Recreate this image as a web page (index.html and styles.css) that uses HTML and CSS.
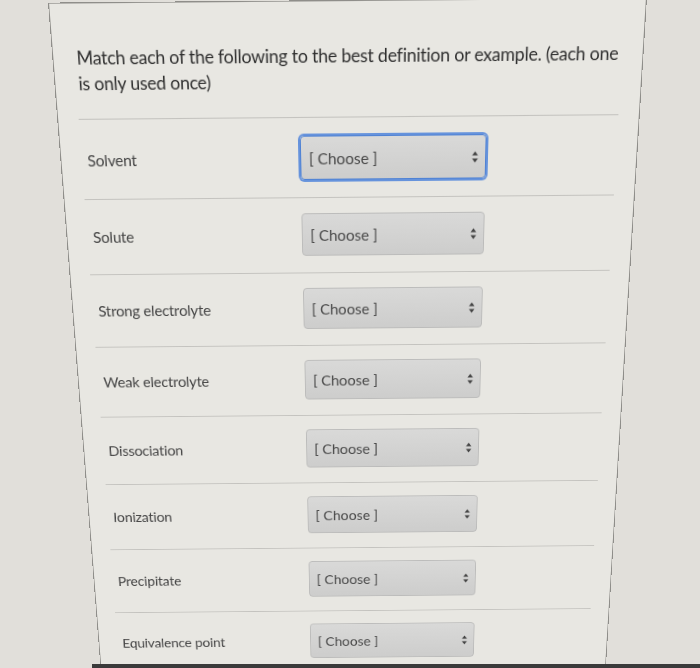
FILE: index.html
```html
<!DOCTYPE html>
<html lang="en">
<head>
    <meta charset="UTF-8">
    <title>Matching Question</title>
    <meta name="viewport" content="width=device-width, initial-scale=1">
    <link rel="stylesheet" href="styles.css">
</head>
<body>
    <div class="stage">
        <div class="question">
            <div class="question-text">Match each of the following to the best definition or example. (each one is only used once)</div>
            <div class="answers">
                <div class="answer-row">
                    <span class="answer-label">Solvent</span>
                    <div class="choose focused"><span>[ Choose ]</span><svg class="arrows" width="7" height="12" viewBox="0 0 7 12"><path d="M3.5 0.5L6.5 4.6H0.5Z M3.5 11.5L0.5 7.4H6.5Z"/></svg></div>
                </div>
                <div class="answer-row">
                    <span class="answer-label">Solute</span>
                    <div class="choose"><span>[ Choose ]</span><svg class="arrows" width="7" height="12" viewBox="0 0 7 12"><path d="M3.5 0.5L6.5 4.6H0.5Z M3.5 11.5L0.5 7.4H6.5Z"/></svg></div>
                </div>
                <div class="answer-row">
                    <span class="answer-label">Strong electrolyte</span>
                    <div class="choose"><span>[ Choose ]</span><svg class="arrows" width="7" height="12" viewBox="0 0 7 12"><path d="M3.5 0.5L6.5 4.6H0.5Z M3.5 11.5L0.5 7.4H6.5Z"/></svg></div>
                </div>
                <div class="answer-row">
                    <span class="answer-label">Weak electrolyte</span>
                    <div class="choose"><span>[ Choose ]</span><svg class="arrows" width="7" height="12" viewBox="0 0 7 12"><path d="M3.5 0.5L6.5 4.6H0.5Z M3.5 11.5L0.5 7.4H6.5Z"/></svg></div>
                </div>
                <div class="answer-row">
                    <span class="answer-label">Dissociation</span>
                    <div class="choose"><span>[ Choose ]</span><svg class="arrows" width="7" height="12" viewBox="0 0 7 12"><path d="M3.5 0.5L6.5 4.6H0.5Z M3.5 11.5L0.5 7.4H6.5Z"/></svg></div>
                </div>
                <div class="answer-row">
                    <span class="answer-label">Ionization</span>
                    <div class="choose"><span>[ Choose ]</span><svg class="arrows" width="7" height="12" viewBox="0 0 7 12"><path d="M3.5 0.5L6.5 4.6H0.5Z M3.5 11.5L0.5 7.4H6.5Z"/></svg></div>
                </div>
                <div class="answer-row">
                    <span class="answer-label">Precipitate</span>
                    <div class="choose"><span>[ Choose ]</span><svg class="arrows" width="7" height="12" viewBox="0 0 7 12"><path d="M3.5 0.5L6.5 4.6H0.5Z M3.5 11.5L0.5 7.4H6.5Z"/></svg></div>
                </div>
                <div class="answer-row">
                    <span class="answer-label">Equivalence point</span>
                    <div class="choose"><span>[ Choose ]</span><svg class="arrows" width="7" height="12" viewBox="0 0 7 12"><path d="M3.5 0.5L6.5 4.6H0.5Z M3.5 11.5L0.5 7.4H6.5Z"/></svg></div>
                </div>
            </div>
        </div>
    </div>
    <div class="bezel"></div>
</body>
</html>
```
FILE: styles.css
```css
    body {
        margin: 0;
        overflow: hidden;
        background-color: #e1dfda;
        font-family: Lato, 'Open Sans', sans-serif;
    }

    .stage {
        height: 664px;
        overflow: hidden;
        padding-left: 48px;
    }

    /* The screen was photographed at an angle, so the card leans back */
    .question {
        width: 599px;
        height: 760px;
        box-sizing: border-box;
        background-color: #e8e7e2;
        border: 1px solid #8f8e8a;
        border-bottom: none;
        transform-origin: 50% 0;
        transform: perspective(600px) rotateZ(-0.5deg) rotateX(-8deg) scaleY(1.12);
    }

    .question-text {
        width: 555px;
        padding: 38px 0 0 23.5px;
        font-size: 18px;
        line-height: 23.5px;
        letter-spacing: -0.25px;
        color: #2f2f2f;
    }

    .answers {
        margin: 21.5px 21px 0 21px;
    }

    .answer-row {
        display: flex;
        align-items: center;
        padding: 15px 0 17px 6px;
        border-top: 1px solid #c4c3bf;
    }

    .answer-row:first-child {
        padding-top: 17.5px;
    }

    .answer-label {
        flex: 0 0 221px;
        font-size: 16px;
        letter-spacing: -0.2px;
        color: #464646;
    }

    /* Dropdowns */
    .choose {
        display: flex;
        align-items: center;
        justify-content: space-between;
        width: 193px;
        height: 43px;
        box-sizing: border-box;
        padding: 0 7px 0 8px;
        border: 1px solid #bcbcbb;
        border-radius: 4px;
        background: linear-gradient(#d9d9d8, #cdcdcc);
        font-size: 16px;
        color: #4a4a4a;
    }

    .choose.focused {
        border-color: #4f82d4;
        box-shadow: 0 0 0 2px #6693dc;
    }

    .arrows {
        fill: #444;
    }

    .bezel {
        height: 4px;
        margin-left: 92px;
        background-color: #3a3a3a;
    }
```
